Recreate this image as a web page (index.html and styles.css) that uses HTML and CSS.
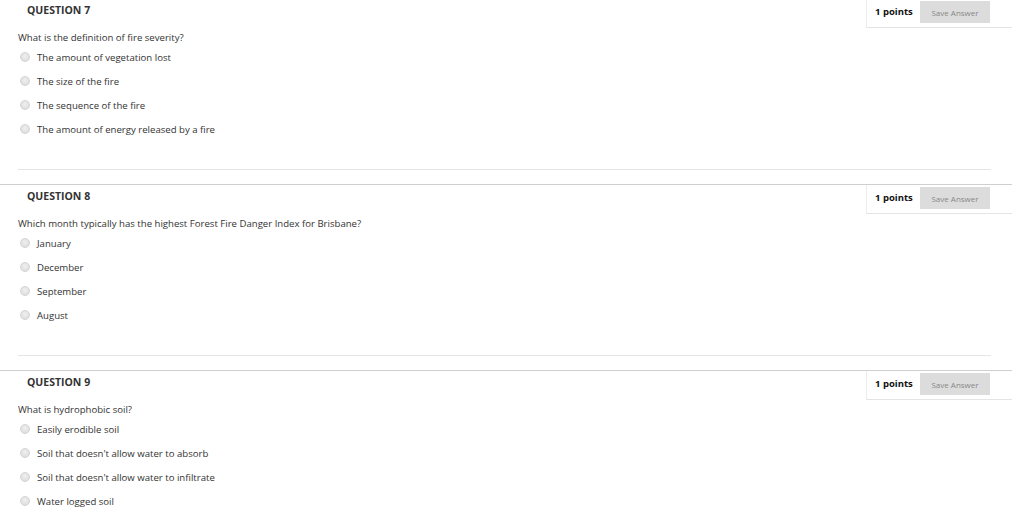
FILE: index.html
```html
<!DOCTYPE html>
<html>
<head>
<meta charset="utf-8">
<link rel="stylesheet" href="styles.css">
</head>
<body>
<div class="page">
  <section class="question first">
    <div class="qhead">
      <h3 class="qtitle">QUESTION 7</h3>
      <div class="points"><span class="pts">1 points</span><button class="save">Save Answer</button></div>
    </div>
    <p class="qtext">What is the definition of fire severity?</p>
    <ul class="options">
      <li><span class="radio"></span>The amount of vegetation lost</li>
      <li><span class="radio"></span>The size of the fire</li>
      <li><span class="radio"></span>The sequence of the fire</li>
      <li><span class="radio"></span>The amount of energy released by a fire</li>
    </ul>
    <div class="sep"></div>
  </section>
  <section class="question">
    <div class="qhead">
      <h3 class="qtitle">QUESTION 8</h3>
      <div class="points"><span class="pts">1 points</span><button class="save">Save Answer</button></div>
    </div>
    <p class="qtext">Which month typically has the highest Forest Fire Danger Index for Brisbane?</p>
    <ul class="options">
      <li><span class="radio"></span>January</li>
      <li><span class="radio"></span>December</li>
      <li><span class="radio"></span>September</li>
      <li><span class="radio"></span>August</li>
    </ul>
    <div class="sep"></div>
  </section>
  <section class="question">
    <div class="qhead">
      <h3 class="qtitle">QUESTION 9</h3>
      <div class="points"><span class="pts">1 points</span><button class="save">Save Answer</button></div>
    </div>
    <p class="qtext">What is hydrophobic soil?</p>
    <ul class="options">
      <li><span class="radio"></span>Easily erodible soil</li>
      <li><span class="radio"></span>Soil that doesn't allow water to absorb</li>
      <li><span class="radio"></span>Soil that doesn't allow water to infiltrate</li>
      <li><span class="radio"></span>Water logged soil</li>
    </ul>
    <div class="sep"></div>
  </section>
</div>
</body>
</html>
```
FILE: styles.css
```css
html, body {
  margin: 0;
  padding: 0;
  background: #fff;
  overflow: hidden;
}
body {
  font-family: "Open Sans", "Liberation Sans", sans-serif;
  color: #222;
}
.page {
  width: 1012px;
  height: 514px;
  overflow: hidden;
}
.question {
  height: 185px;
  border-top: 1px solid #cfcfcf;
  display: flex;
  flex-direction: column;
  flex-shrink: 0;
}
.question.first {
  margin-top: -2px;
}
.qhead {
  display: flex;
  justify-content: space-between;
  align-items: flex-start;
  height: 30px;
}
.qtitle {
  margin: 0;
  padding: 3px 0 0 27px;
  font-size: 10.5px;
  font-weight: 700;
  color: #333;
  line-height: 16px;
}
.points {
  width: 146px;
  height: 29px;
  box-sizing: border-box;
  border-left: 1px solid #ececec;
  border-bottom: 1px solid #e4e4e4;
  display: flex;
  align-items: flex-start;
  padding: 2px 0 0 8px;
}
.pts {
  font-size: 9.5px;
  font-weight: 700;
  color: #111;
  line-height: 22px;
  width: 45px;
}
.save {
  margin: 0;
  border: 0;
  background: #dcdcdc;
  width: 70px;
  height: 22px;
  padding: 0;
  font-family: "Open Sans", "Liberation Sans", sans-serif;
  font-size: 8px;
  color: #888;
}
.qtext {
  margin: 2px 0 0 18px;
  font-size: 9.6px;
  line-height: 14px;
  color: #333;
}
.options {
  list-style: none;
  margin: 0;
  padding: 0;
}
.options li {
  display: flex;
  align-items: center;
  height: 24px;
  font-size: 9.6px;
  color: #333;
  padding-left: 20px;
}
.radio {
  width: 10px;
  height: 10px;
  border-radius: 50%;
  box-sizing: border-box;
  border: 1px solid #d4d4d4;
  background: radial-gradient(circle at 50% 40%, #f0f0f0, #d8d8d8);
  margin-right: 7px;
  flex-shrink: 0;
}
.sep {
  margin: auto 0 14px 18px;
  width: 973px;
  height: 1px;
  background: #e5e5e5;
}
```
